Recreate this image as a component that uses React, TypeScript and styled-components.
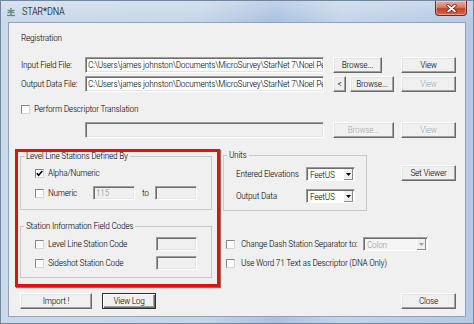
import React from "react";
import styled, { createGlobalStyle, css } from "styled-components";

const FONT = `"Roboto Condensed", "Noto Sans", sans-serif`;

const GlobalStyle = createGlobalStyle`
  html, body { margin: 0; padding: 0; }
  body { width: 474px; height: 324px; overflow: hidden; background: #b6cae3; }
  *, *::before, *::after { box-sizing: border-box; }
`;

const Window = styled.div`
  width: 474px;
  height: 324px;
  display: flex;
  flex-direction: column;
  border: 1px solid #71879f;
  background:
    linear-gradient(180deg, rgba(255, 255, 255, 0.28) 0px, rgba(255, 255, 255, 0) 21px),
    linear-gradient(90deg, #cbd8e9 0%, #c6d5e8 42%, #aac1df 58%, #c3d4e9 72%, #b4c9e3 100%);
  font-family: ${FONT};
  font-stretch: condensed;
  font-size: 9.5px;
  font-weight: 300;
  letter-spacing: -0.3px;
  color: #000;
`;

const TitleBar = styled.div`
  height: 21px;
  flex: none;
  display: flex;
  align-items: center;
  padding-left: 5px;
`;

const AppIcon = styled.svg`
  width: 10px;
  height: 10px;
  flex: none;
`;

const Title = styled.span`
  margin-left: 6px;
  font-size: 10.5px;
  line-height: 12px;
  color: #000;
`;

const CloseButton = styled.div`
  align-self: flex-start;
  margin-left: auto;
  margin-right: 6px;
  width: 32px;
  height: 15px;
  flex: none;
  display: flex;
  align-items: center;
  justify-content: center;
  border: 1px solid #6e2b20;
  border-top: none;
  border-radius: 0 0 4px 4px;
  background: linear-gradient(180deg, #e9ae9f 0%, #d97a64 45%, #c2402a 55%, #d5674e 100%);
  box-shadow: inset 0 0 0 1px rgba(255, 255, 255, 0.35);
`;

const Frame = styled.div`
  flex: 1;
  display: flex;
  padding: 0 7px 6px 7px;
`;

const Client = styled.div`
  flex: 1;
  display: flex;
  flex-direction: column;
  background: #f0f0f0;
  border: 1px solid #8ea3bf;
  padding-top: 9px;
`;

const SectionTitle = styled.div`
  padding-left: 12px;
  line-height: 12px;
  height: 12px;
`;

const Row = styled.div<{ $mt?: number; $pl?: number; $h?: number }>`
  display: flex;
  align-items: center;
  flex: none;
  margin-top: ${(p) => p.$mt ?? 0}px;
  padding-left: ${(p) => p.$pl ?? 0}px;
  height: ${(p) => p.$h ?? 16}px;
`;

const FieldLabel = styled.span<{ $w: number }>`
  width: ${(p) => p.$w}px;
  flex: none;
  white-space: nowrap;
  line-height: 12px;
`;

const TextBox = styled.div<{ $w: number; $h?: number; $disabled?: boolean }>`
  width: ${(p) => p.$w}px;
  height: ${(p) => p.$h ?? 16}px;
  flex: none;
  border: 1px solid;
  border-color: #9c9c9c #ffffff #ffffff #9c9c9c;
  box-shadow: inset 1px 1px 0 #6d6d6d, inset -1px -1px 0 #e3e3e3;
  background: ${(p) => (p.$disabled ? "#f0f0f0" : "#ffffff")};
  color: ${(p) => (p.$disabled ? "#8f8f8f" : "#000000")};
  padding: 0 2px 0 2px;
  line-height: ${(p) => (p.$h ?? 16) - 2}px;
  white-space: nowrap;
  overflow: hidden;
`;

const Cluster = styled.div`
  width: 61px;
  flex: none;
  margin-left: 9px;
  display: flex;
  gap: 4px;
`;

const Button = styled.button<{ $w: number; $ml?: number; $default?: boolean }>`
  width: ${(p) => p.$w}px;
  height: 16px;
  flex: none;
  margin: 0 0 0 ${(p) => p.$ml ?? 0}px;
  padding: 0;
  font-family: ${FONT};
  font-stretch: condensed;
  font-size: 9.5px;
  font-weight: 300;
  letter-spacing: -0.3px;
  line-height: 14px;
  color: #000;
  background: #f0f0f0;
  border: 1px solid;
  border-color: #ffffff #696969 #696969 #ffffff;
  box-shadow: inset -1px -1px 0 #a0a0a0, inset 1px 1px 0 #e3e3e3;
  &:disabled {
    color: #a3a3a3;
    text-shadow: 1px 1px 0 #ffffff;
  }
  ${(p) =>
    p.$default &&
    css`
      border-color: #2e2e2e;
      box-shadow: inset 1px 1px 0 #ffffff, inset -1px -1px 0 #696969, inset -2px -2px 0 #a0a0a0;
    `}
`;

const PushRight = styled.div`
  margin-left: auto;
  margin-right: 9px;
  display: flex;
`;

const CheckBox = styled.span<{ $ml?: number }>`
  width: 9px;
  height: 9px;
  flex: none;
  margin-left: ${(p) => p.$ml ?? 0}px;
  display: flex;
  align-items: center;
  justify-content: center;
  background: #ffffff;
  border: 1px solid;
  border-color: #858585 #d4d4d4 #d4d4d4 #858585;
`;

const CheckText = styled.span<{ $w?: number; $ml?: number }>`
  margin-left: ${(p) => p.$ml ?? 4}px;
  width: ${(p) => (p.$w ? `${p.$w}px` : "auto")};
  flex: none;
  white-space: nowrap;
  line-height: 12px;
`;

const Middle = styled.div`
  display: flex;
  align-items: flex-start;
  margin-top: 11px;
  padding-left: 6px;
  flex: none;
`;

const Highlight = styled.div`
  width: 205px;
  flex: none;
  border: 3px solid #dd1218;
  box-shadow: 1px 1px 1px rgba(60, 0, 0, 0.55);
  padding: 0 5px 6px 2px;
  display: flex;
  flex-direction: column;
`;

const Group = styled.fieldset<{ $w: number; $mt?: number }>`
  width: ${(p) => p.$w}px;
  min-width: 0;
  margin: ${(p) => p.$mt ?? 0}px 0 0 0;
  padding: 0;
  border: 1px solid #c8c8c8;
  flex: none;
`;

const Legend = styled.legend`
  margin-left: 3px;
  padding: 0 2px;
  line-height: 8px;
  font-size: 9.5px;
  white-space: nowrap;
`;

const GroupBody = styled.div<{ $pt: number; $pb: number; $pl: number; $gap: number }>`
  display: flex;
  flex-direction: column;
  gap: ${(p) => p.$gap}px;
  padding: ${(p) => p.$pt}px 0 ${(p) => p.$pb}px ${(p) => p.$pl}px;
`;

const ToText = styled.span`
  width: 20px;
  padding-left: 7px;
  flex: none;
  line-height: 12px;
`;

const RightCol = styled.div`
  margin-left: 3px;
  display: flex;
  flex-direction: column;
  flex: 1;
`;

const UnitsLine = styled.div`
  display: flex;
  align-items: flex-start;
`;

const SideButton = styled.div`
  margin-left: 34px;
  margin-top: 16px;
  display: flex;
`;

const Select = styled.div<{ $w: number; $disabled?: boolean }>`
  width: ${(p) => p.$w}px;
  height: 14px;
  flex: none;
  display: flex;
  border: 1px solid;
  border-color: #9c9c9c #ffffff #ffffff #9c9c9c;
  box-shadow: inset 1px 1px 0 #6d6d6d;
  background: ${(p) => (p.$disabled ? "#f5f5f5" : "#ffffff")};
  color: ${(p) => (p.$disabled ? "#9a9a9a" : "#000000")};
`;

const SelectValue = styled.span`
  flex: 1;
  padding: 1px 0 0 3px;
  line-height: 11px;
  white-space: nowrap;
  overflow: hidden;
`;

const DropButton = styled.span`
  width: 10px;
  flex: none;
  margin: 1px 1px 0 0;
  display: flex;
  align-items: center;
  justify-content: center;
  background: #f0f0f0;
  border-left: 1px solid #ffffff;
  box-shadow: inset -1px -1px 0 #8a8a8a;
`;

const BottomRow = styled.div`
  display: flex;
  align-items: center;
  height: 16px;
  margin-top: 6px;
  padding-left: 11px;
  flex: none;
`;

const Arrow = ({ color }: { color: string }) => (
  <svg width="5" height="3" viewBox="0 0 5 3">
    <path d="M0 0 H5 L2.5 3 Z" fill={color} />
  </svg>
);

const Tick = () => (
  <svg width="7" height="7" viewBox="0 0 7 7">
    <path d="M0.8 3.2 L2.6 5.2 L6.3 1" stroke="#000" strokeWidth="1.6" fill="none" />
  </svg>
);

const PATH = "C:\\Users\\james johnston\\Documents\\MicroSurvey\\StarNet 7\\Noel Pe";

export default function App() {
  return (
    <>
      <GlobalStyle />
      <Window>
        <TitleBar>
          <AppIcon viewBox="0 0 10 10">
            <path d="M5 1 V8" stroke="#3f7a66" strokeWidth="1.2" />
            <path d="M1.5 3 L8.5 6 M8.5 3 L1.5 6" stroke="#4f8c74" strokeWidth="1.2" />
            <path d="M1 8.5 H9" stroke="#6b7c8c" strokeWidth="1.2" />
          </AppIcon>
          <Title>STAR*DNA</Title>
          <CloseButton>
            <svg width="11" height="9" viewBox="0 0 11 9">
              <path d="M2 1.5 L9 7.5 M9 1.5 L2 7.5" stroke="#5a1b12" strokeWidth="3.2" strokeLinecap="round" />
              <path d="M2 1.5 L9 7.5 M9 1.5 L2 7.5" stroke="#ffffff" strokeWidth="1.8" strokeLinecap="round" />
            </svg>
          </CloseButton>
        </TitleBar>
        <Frame>
          <Client>
            <SectionTitle>Registration</SectionTitle>

            <Row $mt={13} $pl={12}>
              <FieldLabel $w={64}>Input Field File:</FieldLabel>
              <TextBox $w={239}>{PATH}</TextBox>
              <Cluster>
                <Button $w={49}>Browse...</Button>
              </Cluster>
              <Button $w={55} $ml={7}>View</Button>
            </Row>

            <Row $mt={3} $pl={12}>
              <FieldLabel $w={64}>Output Data File:</FieldLabel>
              <TextBox $w={239}>{PATH}</TextBox>
              <Cluster>
                <Button $w={13}>&lt;</Button>
                <Button $w={44}>Browse...</Button>
              </Cluster>
              <Button $w={55} $ml={7} disabled>View</Button>
            </Row>

            <Row $mt={11} $pl={12} $h={12}>
              <CheckBox />
              <CheckText>Perform Descriptor Translation</CheckText>
            </Row>

            <Row $mt={7} $pl={76}>
              <TextBox $w={239} $disabled />
              <Cluster>
                <Button $w={61} disabled>Browse...</Button>
              </Cluster>
              <Button $w={55} $ml={7} disabled>View</Button>
            </Row>

            <Middle>
              <Highlight>
                <Group $w={192}>
                  <Legend>Level Line Stations Defined By</Legend>
                  <GroupBody $pt={7} $pb={9} $pl={14} $gap={7}>
                    <Row $h={12}>
                      <CheckBox>
                        <Tick />
                      </CheckBox>
                      <CheckText>Alpha/Numeric</CheckText>
                    </Row>
                    <Row $h={14}>
                      <CheckBox />
                      <CheckText $w={45}>Numeric</CheckText>
                      <TextBox $w={42} $h={14} $disabled>115</TextBox>
                      <ToText>to</ToText>
                      <TextBox $w={42} $h={14} $disabled />
                    </Row>
                  </GroupBody>
                </Group>
                <Group $w={192} $mt={12}>
                  <Legend>Station Information Field Codes</Legend>
                  <GroupBody $pt={7} $pb={7} $pl={14} $gap={5}>
                    <Row $h={14}>
                      <CheckBox />
                      <CheckText $w={108}>Level Line Station Code</CheckText>
                      <TextBox $w={41} $h={14} $disabled />
                    </Row>
                    <Row $h={14}>
                      <CheckBox />
                      <CheckText $w={108}>Sideshot Station Code</CheckText>
                      <TextBox $w={41} $h={14} $disabled />
                    </Row>
                  </GroupBody>
                </Group>
              </Highlight>

              <RightCol>
                <UnitsLine>
                  <Group $w={144} $mt={2}>
                    <Legend>Units</Legend>
                    <GroupBody $pt={8} $pb={7} $pl={12} $gap={8}>
                      <Row $h={14}>
                        <FieldLabel $w={70}>Entered Elevations</FieldLabel>
                        <Select $w={49}>
                          <SelectValue>FeetUS</SelectValue>
                          <DropButton>
                            <Arrow color="#000" />
                          </DropButton>
                        </Select>
                      </Row>
                      <Row $h={14}>
                        <FieldLabel $w={70}>Output Data</FieldLabel>
                        <Select $w={49}>
                          <SelectValue>FeetUS</SelectValue>
                          <DropButton>
                            <Arrow color="#000" />
                          </DropButton>
                        </Select>
                      </Row>
                    </GroupBody>
                  </Group>
                  <SideButton>
                    <Button $w={55}>Set Viewer</Button>
                  </SideButton>
                </UnitsLine>

                <Row $mt={26} $pl={3} $h={14}>
                  <CheckBox />
                  <CheckText $ml={6} $w={122}>Change Dash Station Separator to:</CheckText>
                  <Select $w={65} $disabled>
                    <SelectValue>Colon</SelectValue>
                    <DropButton>
                      <Arrow color="#a0a0a0" />
                    </DropButton>
                  </Select>
                </Row>
                <Row $mt={5} $pl={3} $h={14}>
                  <CheckBox />
                  <CheckText $ml={6}>Use Word 71 Text as Descriptor (DNA Only)</CheckText>
                </Row>
              </RightCol>
            </Middle>

            <BottomRow>
              <Button $w={72}>Import !</Button>
              <Button $w={54} $ml={10} $default>View Log</Button>
              <PushRight>
                <Button $w={55}>Close</Button>
              </PushRight>
            </BottomRow>
          </Client>
        </Frame>
      </Window>
    </>
  );
}
